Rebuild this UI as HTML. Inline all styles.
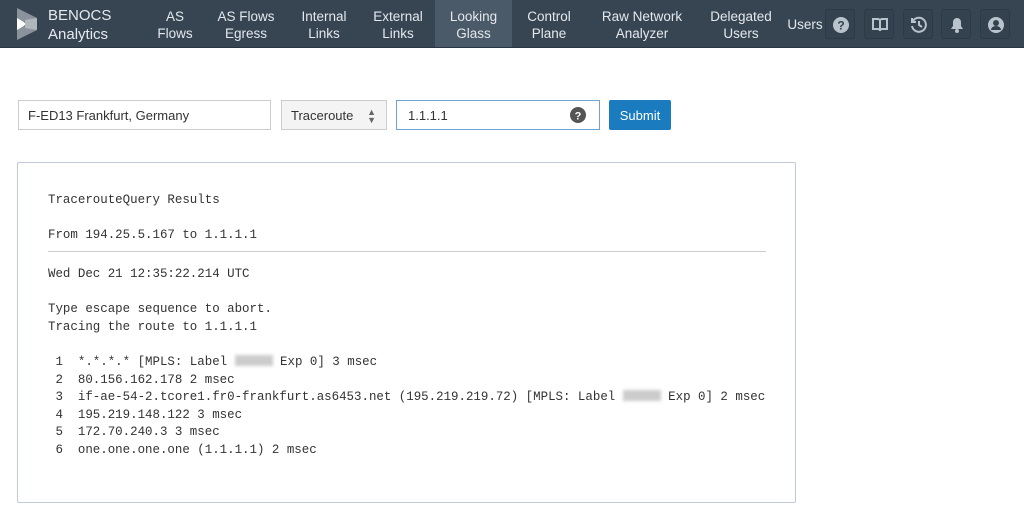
<!DOCTYPE html>
<html><head><meta charset="utf-8"><style>
*{box-sizing:border-box;margin:0;padding:0}
body{width:1024px;height:517px;background:#fff;font-family:"Liberation Sans",sans-serif;position:relative;overflow:hidden}
.nav{position:absolute;left:0;top:0;width:1024px;height:48px;background:#374553;border-bottom:1px solid #2a3540}
.brand{position:absolute;left:48px;top:6px;color:#e6eaee;font-size:15px;line-height:19px}
.item{position:absolute;top:0;height:47px;color:#e3e8ec;font-size:13.5px;line-height:17px;text-align:center;padding-top:8px}
.act{background:#4b5a68}
.ib{position:absolute;top:9px;width:30px;height:30px;border:1px solid #2d3945;border-radius:3px;background:#34414e}
.ib svg{position:absolute;left:6px;top:6px}
.inp{position:absolute;top:100px;height:30px;border:1px solid #ccc;font-size:13px;line-height:30px;padding-left:9px;color:#333}
.box{position:absolute;left:17px;top:162px;width:779px;height:341px;border:1px solid #bfcad6;border-radius:2px}
pre{font-family:"Liberation Mono",monospace;font-size:12.45px;color:#333;position:absolute;left:48px;line-height:17.6px}
.bl{display:inline-block;width:38px;height:11px;background:#ccc;filter:blur(1.5px);vertical-align:-1px}
</style></head><body>
<div class="nav">
<svg style="position:absolute;left:15px;top:8px" width="24" height="32" viewBox="0 0 24 32"><polygon points="2,0 22,10 2,16" fill="#8a939b"/><polygon points="2,16 22,22 2,32" fill="#8a939b"/><polygon points="2,10 12,16 2,22" fill="#fff"/><polygon points="10,12 22,10 22,22 10,20" fill="#b0b7bd"/></svg>
<div class="brand">BENOCS<br>Analytics</div>
<div class="item" style="left:155px;width:40px">AS<br>Flows</div>
<div class="item" style="left:212px;width:68px">AS Flows<br>Egress</div>
<div class="item" style="left:295px;width:58px">Internal<br>Links</div>
<div class="item" style="left:366px;width:64px">External<br>Links</div>
<div class="item act" style="left:435px;width:77px">Looking<br>Glass</div>
<div class="item" style="left:520px;width:58px">Control<br>Plane</div>
<div class="item" style="left:597px;width:90px">Raw Network<br>Analyzer</div>
<div class="item" style="left:703px;width:76px">Delegated<br>Users</div>
<div class="item" style="left:786px;width:38px;padding-top:16px">Users</div>
<div class="ib" style="left:825px"><svg width="18" height="18" viewBox="0 0 18 18"><circle cx="9" cy="9" r="8" fill="#b9c3cc"/><text x="9" y="13.5" font-size="12" font-weight="bold" text-anchor="middle" fill="#34414e" font-family="Liberation Sans">?</text></svg></div>
<div class="ib" style="left:864px"><svg width="18" height="18" viewBox="0 0 18 18" fill="none" stroke="#b9c3cc" stroke-width="2"><path d="M2 3h5a2 2 0 0 1 2 2v10a2 2 0 0 0-2-2H2zM16 3h-5a2 2 0 0 0-2 2v10a2 2 0 0 1 2-2h5z"/></svg></div>
<div class="ib" style="left:903px"><svg width="18" height="18" viewBox="0 0 18 18" fill="none" stroke="#b9c3cc" stroke-width="2"><path d="M3 5a7 7 0 1 1-1 5"/><path d="M2 2v4h4"/><path d="M9 5v4l3 2"/></svg></div>
<div class="ib" style="left:941px"><svg width="18" height="18" viewBox="0 0 18 18" fill="#b9c3cc"><path d="M9 2a4 4 0 0 1 4 4v4l2 3H3l2-3V6a4 4 0 0 1 4-4z"/><circle cx="9" cy="15" r="2"/></svg></div>
<div class="ib" style="left:980px"><svg width="18" height="18" viewBox="0 0 18 18"><circle cx="9" cy="9" r="8" fill="#b9c3cc"/><circle cx="9" cy="7" r="3" fill="#34414e"/><path d="M4 14a5 4 0 0 1 10 0z" fill="#34414e"/></svg></div>
</div>
<div class="inp" style="left:18px;width:253px">F-ED13 Frankfurt, Germany</div>
<div class="inp" style="left:281px;width:106px;background:#f4f4f4">Traceroute<span style="position:absolute;right:10px;top:-1px;font-size:9px;line-height:8px;padding-top:8px;color:#666">▲<br>▼</span></div>
<div class="inp" style="left:396px;width:204px;border-color:#6da4d3;padding-left:11px">1.1.1.1<svg style="position:absolute;right:13px;top:6px" width="16" height="16" viewBox="0 0 16 16"><circle cx="8" cy="8" r="8" fill="#555"/><text x="8" y="12.5" font-size="11" font-weight="bold" text-anchor="middle" fill="#fff" font-family="Liberation Sans">?</text></svg></div>
<div style="position:absolute;left:609px;top:100px;width:62px;height:30px;background:#1a7bbf;color:#fff;font-size:13px;line-height:31px;text-align:center;border-radius:2px">Submit</div>
<div class="box"></div>
<pre style="top:192px">TracerouteQuery Results

From 194.25.5.167 to 1.1.1.1</pre>
<div style="position:absolute;left:48px;top:251px;width:718px;height:1px;background:#ccc"></div>
<pre style="top:266px">Wed Dec 21 12:35:22.214 UTC

Type escape sequence to abort.
Tracing the route to 1.1.1.1

 1  *.*.*.* [MPLS: Label <span class="bl"></span> Exp 0] 3 msec
 2  80.156.162.178 2 msec
 3  if-ae-54-2.tcore1.fr0-frankfurt.as6453.net (195.219.219.72) [MPLS: Label <span class="bl"></span> Exp 0] 2 msec
 4  195.219.148.122 3 msec
 5  172.70.240.3 3 msec
 6  one.one.one.one (1.1.1.1) 2 msec</pre>
</body></html>
